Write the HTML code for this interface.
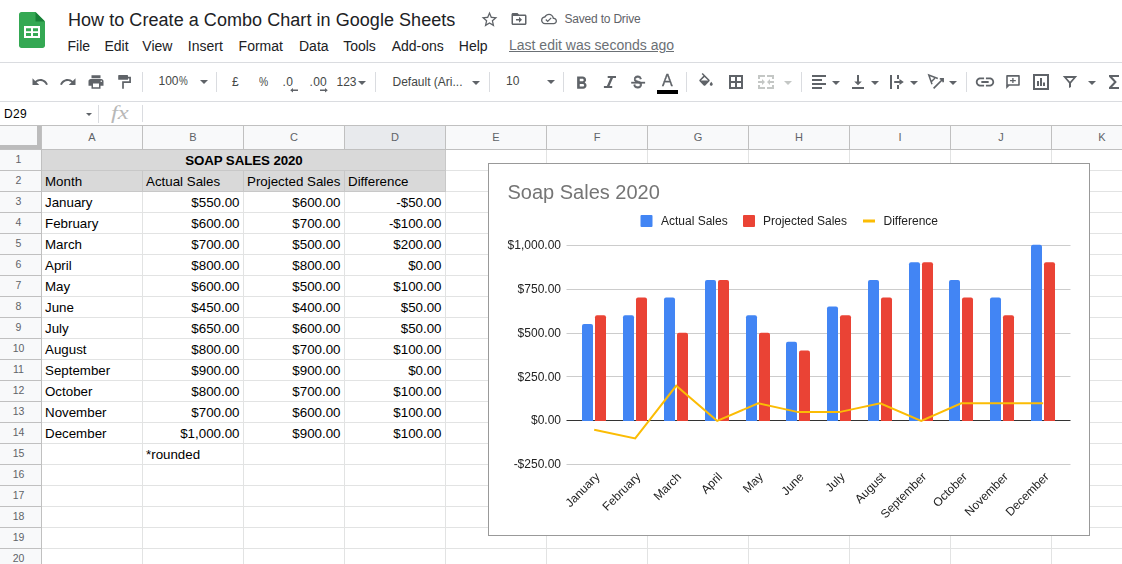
<!DOCTYPE html>
<html lang="en"><head><meta charset="utf-8">
<title>How to Create a Combo Chart in Google Sheets</title>
<style>
*{box-sizing:border-box;margin:0;padding:0}
html,body{width:1122px;height:564px;overflow:hidden;background:#fff}
body{position:relative;font-family:"Liberation Sans",sans-serif;color:#202124}
.t{position:absolute;white-space:nowrap;line-height:1}
.ic{position:absolute;display:block;overflow:visible}
.sep{position:absolute;width:1px;background:#dadce0}
.hl{position:absolute;height:1px}
.vl{position:absolute;width:1px}
.box{position:absolute}
.title{font-size:18px;color:#202124}
.menu{font-size:14px;color:#202124}
.tb{font-size:12px;color:#444746}
.cell{position:absolute;font-size:13.333px;color:#000;height:20px;line-height:22px;white-space:nowrap}
.rn{position:absolute;left:0;width:37px;text-align:center;font-size:10.500px;color:#5f6368;height:20px;line-height:18px}
.ch{position:absolute;text-align:center;font-size:11px;color:#5f6368;height:23px;line-height:23px;top:126px}
</style></head><body>

<!-- title bar -->
<svg class="ic" style="left:19px;top:12px" width="26" height="36" viewBox="0 0 26 36">
<path fill="#34a853" d="M2.500 0H16.500L26 9.500V33.500C26 34.900 24.900 36 23.500 36H2.500C1.100 36 0 34.900 0 33.500V2.500C0 1.100 1.100 0 2.500 0Z"/>
<path fill="#188038" d="M16.500 0L26 9.500H16.500Z"/>
<path fill="#fff" d="M5 14h16v12H5zM7 16.200v3h5v-3zM14 16.200v3h5v-3zM7 21v3h5v-3zM14 21v3h5v-3z" fill-rule="evenodd"/>
</svg>
<div class="t title" style="left:68px;top:11px;letter-spacing:0.050px">How to Create a Combo Chart in Google Sheets</div>
<div class="t menu" style="left:67.5px;top:39px;">File</div>
<div class="t menu" style="left:104.39999999999999px;top:39px;">Edit</div>
<div class="t menu" style="left:142.3px;top:39px;">View</div>
<div class="t menu" style="left:187.8px;top:39px;">Insert</div>
<div class="t menu" style="left:238.60000000000002px;top:39px;">Format</div>
<div class="t menu" style="left:299.0px;top:39px;">Data</div>
<div class="t menu" style="left:343.2px;top:39px;">Tools</div>
<div class="t menu" style="left:391.7px;top:39px;">Add-ons</div>
<div class="t menu" style="left:458.8px;top:39px;">Help</div>
<div class="t menu" style="left:509px;top:38px;color:#6b7075;text-decoration:underline">Last edit was seconds ago</div>
<svg class="ic" style="left:479.5px;top:9.6px" width="19" height="19" viewBox="0 0 24 24"><path fill="#5f6368" d="M22 9.24l-7.19-.62L12 2 9.19 8.63 2 9.24l5.46 4.73L5.82 21 12 17.27 18.18 21l-1.63-7.03L22 9.24zM12 15.4l-3.76 2.27 1-4.28-3.32-2.88 4.38-.38L12 6.1l1.71 4.04 4.38.38-3.32 2.88 1 4.28L12 15.4z"/></svg>
<svg class="ic" style="left:509.5px;top:10px" width="18" height="18" viewBox="0 0 24 24"><path fill="#5f6368" d="M20 6h-8l-2-2H4c-1.100 0-2 .9-2 2v12c0 1.100.9 2 2 2h16c1.100 0 2-.9 2-2V8c0-1.100-.9-2-2-2zm0 12H4V8h16v10zm-8.010-9l4.010 4-4.010 4v-3H8v-2h3.990V9z"/></svg>
<svg class="ic" style="left:541px;top:11px" width="16" height="16" viewBox="0 0 24 24"><path fill="#5f6368" d="M19.35 10.04C18.67 6.59 15.64 4 12 4 9.11 4 6.6 5.64 5.35 8.04 2.34 8.36 0 10.91 0 14c0 3.31 2.69 6 6 6h13c2.76 0 5-2.24 5-5 0-2.64-2.05-4.78-4.65-4.96zM19 18H6c-2.21 0-4-1.79-4-4 0-2.05 1.53-3.76 3.56-3.97l1.07-.11.5-.95C8.08 7.14 9.94 6 12 6c2.62 0 4.88 1.86 5.39 4.43l.3 1.5 1.53.11c1.56.1 2.78 1.41 2.78 2.96 0 1.65-1.35 3-3 3zm-9-3.82l-2.09-2.09L6.5 13.5 10 17l6.01-6.010-1.410-1.410z"/></svg>
<div class="t tb" style="left:564.5px;top:13px;letter-spacing:-0.2px;color:#5f6368">Saved to Drive</div>
<div class="hl" style="left:0;top:62px;width:1122px;background:#dadce0"></div>
<!-- toolbar -->
<svg class="ic" style="left:31px;top:73px" width="18" height="18" viewBox="0 0 24 24"><path fill="#5f6368" d="M12.5 8c-2.65 0-5.05.99-6.9 2.6L2 7v9h9l-3.62-3.62c1.39-1.16 3.16-1.88 5.12-1.88 3.54 0 6.55 2.31 7.6 5.5l2.37-.78C21.08 11.03 17.15 8 12.5 8z"/></svg>
<svg class="ic" style="left:59px;top:73px" width="18" height="18" viewBox="0 0 24 24"><path fill="#5f6368" d="M18.4 10.6C16.55 8.99 14.15 8 11.5 8c-4.65 0-8.58 3.03-9.96 7.22L3.9 16c1.05-3.19 4.05-5.5 7.6-5.5 1.95 0 3.73.72 5.12 1.88L13 16h9V7l-3.6 3.6z"/></svg>
<svg class="ic" style="left:87px;top:73px" width="18" height="18" viewBox="0 0 24 24"><path fill="#5f6368" d="M19 8H5c-1.66 0-3 1.34-3 3v6h4v4h12v-4h4v-6c0-1.66-1.34-3-3-3zm-3 11H8v-5h8v5zm3-7c-.55 0-1-.45-1-1s.45-1 1-1 1 .45 1 1-.45 1-1 1zm-1-9H6v4h12V3z"/></svg>
<div class="sep" style="left:142px;top:72px;height:20px"></div>
<div class="t tb" style="left:158.5px;top:75px;">100</div>
<div class="t tb" style="left:178.7px;top:75px;transform:scaleX(0.82);transform-origin:0 0">%</div>
<svg class="ic" style="left:200px;top:80px" width="8" height="4" viewBox="0 0 8 4"><path fill="#5f6368" d="M0 0h8L4 4z"/></svg>
<div class="sep" style="left:216px;top:72px;height:20px"></div>
<div class="t tb" style="left:232px;top:76px;">£</div>
<div class="t tb" style="left:259px;top:76px;transform:scaleX(0.86);transform-origin:0 0">%</div>
<div class="t tb" style="left:282.5px;top:76px;letter-spacing:0.3px">.0</div>
<div class="t tb" style="left:309.5px;top:76px;letter-spacing:0.3px">.00</div>
<div class="t tb" style="left:336.5px;top:76px;">123</div>
<svg class="ic" style="left:358px;top:81px" width="8" height="4" viewBox="0 0 8 4"><path fill="#5f6368" d="M0 0h8L4 4z"/></svg>
<div class="sep" style="left:375px;top:72px;height:20px"></div>
<div class="t tb" style="left:392.5px;top:76px;">Default (Ari...</div>
<svg class="ic" style="left:472px;top:81px" width="8" height="4" viewBox="0 0 8 4"><path fill="#5f6368" d="M0 0h8L4 4z"/></svg>
<div class="sep" style="left:489px;top:72px;height:20px"></div>
<div class="t tb" style="left:506px;top:75px;">10</div>
<svg class="ic" style="left:547px;top:80px" width="8" height="4" viewBox="0 0 8 4"><path fill="#5f6368" d="M0 0h8L4 4z"/></svg>
<div class="sep" style="left:563px;top:72px;height:20px"></div>
<svg class="ic" style="left:570.7px;top:72.5px" width="21" height="21" viewBox="0 0 24 24"><path fill="#5f6368" d="M15.6 10.79c.97-.67 1.65-1.77 1.65-2.79 0-2.26-1.75-4-4-4H7v14h7.04c2.09 0 3.71-1.7 3.71-3.79 0-1.52-.86-2.82-2.15-3.42zM10 6.5h3c.83 0 1.5.67 1.5 1.5s-.67 1.5-1.5 1.5h-3v-3zm3.500 9H10v-3h3.500c.83 0 1.500.67 1.500 1.500s-.67 1.500-1.500 1.500z"/></svg>
<div class="t tb" style="left:632.4px;top:73.5px;font-size:17px;color:#5f6368;-webkit-text-stroke:0.8px #5f6368;transform:scaleX(0.78);will-change:transform">S</div>
<div class="t tb" style="left:661.5px;top:73px;font-size:16px;color:#5f6368;-webkit-text-stroke:0.3px #5f6368;will-change:transform">A</div>
<div class="box" style="left:657px;top:90px;width:21px;height:4px;background:#000"></div>
<div class="sep" style="left:686px;top:72px;height:20px"></div>
<svg class="ic" style="left:697px;top:73px" width="18" height="18" viewBox="0 0 24 24"><path fill="#5f6368" d="M16.56 8.94L7.62 0 6.21 1.41l2.38 2.38-5.15 5.15c-.59.59-.59 1.54 0 2.12l5.5 5.5c.29.29.68.44 1.06.44s.77-.15 1.06-.44l5.5-5.500c.59-.58.59-1.53 0-2.12zM5.21 10L10 5.21 14.79 10H5.21zM19 11.500s-2 2.170-2 3.500c0 1.100.9 2 2 2s2-.9 2-2c0-1.330-2-3.500-2-3.500z"/></svg>
<svg class="ic" style="left:784px;top:81px" width="8" height="4" viewBox="0 0 8 4"><path fill="#c4c7c5" d="M0 0h8L4 4z"/></svg>
<div class="sep" style="left:801px;top:72px;height:20px"></div>
<svg class="ic" style="left:832px;top:81px" width="8" height="4" viewBox="0 0 8 4"><path fill="#5f6368" d="M0 0h8L4 4z"/></svg>
<svg class="ic" style="left:871px;top:81px" width="8" height="4" viewBox="0 0 8 4"><path fill="#5f6368" d="M0 0h8L4 4z"/></svg>
<svg class="ic" style="left:910px;top:81px" width="8" height="4" viewBox="0 0 8 4"><path fill="#5f6368" d="M0 0h8L4 4z"/></svg>
<svg class="ic" style="left:949px;top:81px" width="8" height="4" viewBox="0 0 8 4"><path fill="#5f6368" d="M0 0h8L4 4z"/></svg>
<div class="sep" style="left:966px;top:72px;height:20px"></div>
<svg class="ic" style="left:974px;top:71px" width="22" height="22" viewBox="0 0 24 24"><path fill="#5f6368" d="M3.9 12c0-1.71 1.39-3.1 3.1-3.1h4V7H7c-2.76 0-5 2.24-5 5s2.24 5 5 5h4v-1.9H7c-1.71 0-3.1-1.39-3.1-3.1zM8 13h8v-2H8v2zm9-6h-4v1.9h4c1.71 0 3.1 1.39 3.1 3.1s-1.39 3.1-3.1 3.1h-4V17h4c2.76 0 5-2.24 5-5s-2.240-5-5-5z"/></svg>
<svg class="ic" style="left:1088px;top:81px" width="8" height="4" viewBox="0 0 8 4"><path fill="#5f6368" d="M0 0h8L4 4z"/></svg>
<svg class="ic" style="left:0;top:62px" width="1122" height="40" viewBox="0 62 1122 40">
<path fill="#5f6368" d="M293 88L290.200 90.300 293 92.600V91H298V89.600H293Z"/>
<path fill="#5f6368" d="M325 88L327.800 90.300 325 92.600V91H320V89.600H325Z"/>
<rect x="118.200" y="75.100" width="9.800" height="4.700" rx="0.600" fill="#5f6368"/>
<path d="M128 77.700H130.100V82.100H123V88.800" fill="none" stroke="#5f6368" stroke-width="1.700" stroke-linejoin="miter"/>
<path d="M607.700 76H616V77.900H613L609.500 86.100H612.200V88H603.900V86.100H606.900L610.400 77.900H607.700Z" fill="#5f6368"/>
<rect x="631.200" y="81.800" width="13.900" height="1.800" fill="#5f6368"/>
<path fill-rule="evenodd" fill="#5f6368" d="M729 75H743V89H729ZM731 77V81H735V77ZM737 77V81H741V77ZM731 83V87H735V83ZM737 83V87H741V83Z"/>
<path fill="#c4c7c5" d="M758 75H765V77H760V79H758ZM767 75H774V79H772V77H767ZM758 85H760V87H765V89H758ZM772 85H774V89H767V87H772ZM758 81.100H762V79L765 82 762 85V82.900H758ZM774 81.100H770V79L767 82 770 85V82.900H774Z"/>
<path fill="#5f6368" d="M812 75H826V77H812ZM812 79H822V81H812ZM812 83H826V85H812ZM812 87H822V89H812Z"/>
<path fill="#5f6368" d="M857 75H859V81.500H861.800L858 85.300 854.200 81.500H857ZM852 87H864V89H852Z"/>
<path fill="#5f6368" d="M890 75H892V89H890ZM897 75H899V79H897ZM897 85H899V89H897ZM894.200 81.100H899.500V79L903.800 82 899.500 85V82.900H894.200Z"/>
<path fill="none" stroke="#5f6368" stroke-width="1.500" stroke-linecap="butt" d="M937.800 78.500L928.800 75.100 932 84.300M931.300 81.700L934.800 78.300"/>
<path fill="none" stroke="#5f6368" stroke-width="1.700" d="M933.600 88.300L943 79M939.800 78.900H943.100V82.300"/>
<path fill="none" stroke="#5f6368" stroke-width="1.600" stroke-linejoin="round" d="M1007 75.900H1019V85H1007Z"/>
<path fill="#5f6368" d="M1006.200 85V88.900L1009.800 85.300Z"/>
<path fill="#5f6368" d="M1012.250 78H1013.550V79.900H1015.800V81.200H1013.550V83.100H1012.250V81.200H1010V79.900H1012.250Z"/>
<path fill-rule="evenodd" fill="#5f6368" d="M1033 74H1049V90H1033ZM1035 76V88H1047V76Z"/>
<path fill="#5f6368" d="M1037 81H1039V86H1037ZM1040 78H1042V86H1040ZM1043 82.500H1045V86H1043Z"/>
<path fill-rule="evenodd" fill="#5f6368" d="M1062.800 76H1077.200L1071 83.300V87L1069 88V83.300ZM1066.700 77.900L1070 81.700 1073.300 77.900Z"/>
<path fill="#5f6368" d="M1109 75H1119V77H1112.200L1116.800 82 1112.200 87H1119V89H1109V87.200L1114 82 1109 76.800Z"/>
</svg>
<div class="hl" style="left:0;top:101px;width:1122px;background:#dadce0"></div>
<!-- formula bar -->
<div class="t " style="left:4px;top:108px;font-size:12px;color:#000;letter-spacing:0.3px">D29</div>
<svg class="ic" style="left:85.500px;top:113px" width="6" height="3" viewBox="0 0 6 3"><path fill="#5f6368" d="M0 0h6L3 3z"/></svg>
<div class="sep" style="left:98px;top:105px;height:18px"></div>
<div class="t " style="left:111px;top:103px;font-family:'Liberation Serif',serif;font-size:19px;color:#b8b8b8;transform:scaleX(1.3);transform-origin:0 0"><i>fx</i></div>
<div class="sep" style="left:142px;top:105px;height:17px"></div>
<!-- grid -->
<div class="box" style="left:0;top:125px;width:1122px;height:24px;background:#f8f9fa"></div>
<div class="box" style="left:0;top:149px;width:41px;height:415px;background:#f8f9fa"></div>
<div class="box" style="left:345px;top:126px;width:100px;height:23px;background:#e8eaed"></div>
<div class="box" style="left:42px;top:150px;width:403px;height:41px;background:#d9d9d9"></div>
<div class="hl" style="left:41px;top:170px;width:1081px;background:#e2e3e3"></div>
<div class="hl" style="left:0;top:170px;width:41px;background:#c0c0c0"></div>
<div class="hl" style="left:41px;top:191px;width:1081px;background:#e2e3e3"></div>
<div class="hl" style="left:0;top:191px;width:41px;background:#c0c0c0"></div>
<div class="hl" style="left:41px;top:212px;width:1081px;background:#e2e3e3"></div>
<div class="hl" style="left:0;top:212px;width:41px;background:#c0c0c0"></div>
<div class="hl" style="left:41px;top:233px;width:1081px;background:#e2e3e3"></div>
<div class="hl" style="left:0;top:233px;width:41px;background:#c0c0c0"></div>
<div class="hl" style="left:41px;top:254px;width:1081px;background:#e2e3e3"></div>
<div class="hl" style="left:0;top:254px;width:41px;background:#c0c0c0"></div>
<div class="hl" style="left:41px;top:275px;width:1081px;background:#e2e3e3"></div>
<div class="hl" style="left:0;top:275px;width:41px;background:#c0c0c0"></div>
<div class="hl" style="left:41px;top:296px;width:1081px;background:#e2e3e3"></div>
<div class="hl" style="left:0;top:296px;width:41px;background:#c0c0c0"></div>
<div class="hl" style="left:41px;top:317px;width:1081px;background:#e2e3e3"></div>
<div class="hl" style="left:0;top:317px;width:41px;background:#c0c0c0"></div>
<div class="hl" style="left:41px;top:338px;width:1081px;background:#e2e3e3"></div>
<div class="hl" style="left:0;top:338px;width:41px;background:#c0c0c0"></div>
<div class="hl" style="left:41px;top:359px;width:1081px;background:#e2e3e3"></div>
<div class="hl" style="left:0;top:359px;width:41px;background:#c0c0c0"></div>
<div class="hl" style="left:41px;top:380px;width:1081px;background:#e2e3e3"></div>
<div class="hl" style="left:0;top:380px;width:41px;background:#c0c0c0"></div>
<div class="hl" style="left:41px;top:401px;width:1081px;background:#e2e3e3"></div>
<div class="hl" style="left:0;top:401px;width:41px;background:#c0c0c0"></div>
<div class="hl" style="left:41px;top:422px;width:1081px;background:#e2e3e3"></div>
<div class="hl" style="left:0;top:422px;width:41px;background:#c0c0c0"></div>
<div class="hl" style="left:41px;top:443px;width:1081px;background:#e2e3e3"></div>
<div class="hl" style="left:0;top:443px;width:41px;background:#c0c0c0"></div>
<div class="hl" style="left:41px;top:464px;width:1081px;background:#e2e3e3"></div>
<div class="hl" style="left:0;top:464px;width:41px;background:#c0c0c0"></div>
<div class="hl" style="left:41px;top:485px;width:1081px;background:#e2e3e3"></div>
<div class="hl" style="left:0;top:485px;width:41px;background:#c0c0c0"></div>
<div class="hl" style="left:41px;top:506px;width:1081px;background:#e2e3e3"></div>
<div class="hl" style="left:0;top:506px;width:41px;background:#c0c0c0"></div>
<div class="hl" style="left:41px;top:527px;width:1081px;background:#e2e3e3"></div>
<div class="hl" style="left:0;top:527px;width:41px;background:#c0c0c0"></div>
<div class="hl" style="left:41px;top:548px;width:1081px;background:#e2e3e3"></div>
<div class="hl" style="left:0;top:548px;width:41px;background:#c0c0c0"></div>
<div class="vl" style="left:142px;top:149px;height:415px;background:#e2e3e3"></div>
<div class="vl" style="left:142px;top:126px;height:23px;background:#c0c0c0"></div>
<div class="vl" style="left:243px;top:149px;height:415px;background:#e2e3e3"></div>
<div class="vl" style="left:243px;top:126px;height:23px;background:#c0c0c0"></div>
<div class="vl" style="left:344px;top:149px;height:415px;background:#e2e3e3"></div>
<div class="vl" style="left:344px;top:126px;height:23px;background:#c0c0c0"></div>
<div class="vl" style="left:445px;top:149px;height:415px;background:#e2e3e3"></div>
<div class="vl" style="left:445px;top:126px;height:23px;background:#c0c0c0"></div>
<div class="vl" style="left:546px;top:149px;height:415px;background:#e2e3e3"></div>
<div class="vl" style="left:546px;top:126px;height:23px;background:#c0c0c0"></div>
<div class="vl" style="left:647px;top:149px;height:415px;background:#e2e3e3"></div>
<div class="vl" style="left:647px;top:126px;height:23px;background:#c0c0c0"></div>
<div class="vl" style="left:748px;top:149px;height:415px;background:#e2e3e3"></div>
<div class="vl" style="left:748px;top:126px;height:23px;background:#c0c0c0"></div>
<div class="vl" style="left:849px;top:149px;height:415px;background:#e2e3e3"></div>
<div class="vl" style="left:849px;top:126px;height:23px;background:#c0c0c0"></div>
<div class="vl" style="left:950px;top:149px;height:415px;background:#e2e3e3"></div>
<div class="vl" style="left:950px;top:126px;height:23px;background:#c0c0c0"></div>
<div class="vl" style="left:1051px;top:149px;height:415px;background:#e2e3e3"></div>
<div class="vl" style="left:1051px;top:126px;height:23px;background:#c0c0c0"></div>
<div class="hl" style="left:41px;top:170px;width:405px;background:#c8c8c8"></div>
<div class="hl" style="left:41px;top:191px;width:405px;background:#c8c8c8"></div>
<div class="vl" style="left:142px;top:171px;height:20px;background:#c8c8c8"></div>
<div class="vl" style="left:243px;top:171px;height:20px;background:#c8c8c8"></div>
<div class="vl" style="left:344px;top:171px;height:20px;background:#c8c8c8"></div>
<div class="vl" style="left:445px;top:149px;height:42px;background:#c8c8c8"></div>
<div class="box" style="left:42px;top:150px;width:403px;height:20px;background:#d9d9d9"></div>
<div class="hl" style="left:0;top:125px;width:1122px;background:#c0c0c0"></div>
<div class="hl" style="left:0;top:149px;width:1122px;background:#c0c0c0"></div>
<div class="vl" style="left:41px;top:126px;height:438px;background:#c0c0c0"></div>
<div class="box" style="left:37px;top:126px;width:4px;height:23px;background:#bcbcbc"></div>
<div class="box" style="left:0;top:145px;width:41px;height:4px;background:#bcbcbc"></div>
<div class="ch" style="left:42px;width:100px">A</div>
<div class="ch" style="left:143px;width:100px">B</div>
<div class="ch" style="left:244px;width:100px">C</div>
<div class="ch" style="left:345px;width:100px">D</div>
<div class="ch" style="left:446px;width:100px">E</div>
<div class="ch" style="left:547px;width:100px">F</div>
<div class="ch" style="left:648px;width:100px">G</div>
<div class="ch" style="left:749px;width:100px">H</div>
<div class="ch" style="left:850px;width:100px">I</div>
<div class="ch" style="left:951px;width:100px">J</div>
<div class="ch" style="left:1052px;width:100px">K</div>
<div class="rn" style="top:150px">1</div>
<div class="rn" style="top:171px">2</div>
<div class="rn" style="top:192px">3</div>
<div class="rn" style="top:213px">4</div>
<div class="rn" style="top:234px">5</div>
<div class="rn" style="top:255px">6</div>
<div class="rn" style="top:276px">7</div>
<div class="rn" style="top:297px">8</div>
<div class="rn" style="top:318px">9</div>
<div class="rn" style="top:339px">10</div>
<div class="rn" style="top:360px">11</div>
<div class="rn" style="top:381px">12</div>
<div class="rn" style="top:402px">13</div>
<div class="rn" style="top:423px">14</div>
<div class="rn" style="top:444px">15</div>
<div class="rn" style="top:465px">16</div>
<div class="rn" style="top:486px">17</div>
<div class="rn" style="top:507px">18</div>
<div class="rn" style="top:528px">19</div>
<div class="rn" style="top:549px">20</div>
<div class="cell" style="left:42.400px;top:150px;width:403px;text-align:center;font-weight:bold;letter-spacing:-0.100px">SOAP SALES 2020</div>
<div class="cell" style="left:45px;top:171px">Month</div>
<div class="cell" style="left:146px;top:171px">Actual Sales</div>
<div class="cell" style="left:247px;top:171px">Projected Sales</div>
<div class="cell" style="left:348px;top:171px">Difference</div>
<div class="cell" style="left:45px;top:192px">January</div>
<div class="cell" style="left:143px;top:192px;width:96.500px;text-align:right">$550.00</div>
<div class="cell" style="left:244px;top:192px;width:96.500px;text-align:right">$600.00</div>
<div class="cell" style="left:345px;top:192px;width:96.500px;text-align:right">-$50.00</div>
<div class="cell" style="left:45px;top:213px">February</div>
<div class="cell" style="left:143px;top:213px;width:96.500px;text-align:right">$600.00</div>
<div class="cell" style="left:244px;top:213px;width:96.500px;text-align:right">$700.00</div>
<div class="cell" style="left:345px;top:213px;width:96.500px;text-align:right">-$100.00</div>
<div class="cell" style="left:45px;top:234px">March</div>
<div class="cell" style="left:143px;top:234px;width:96.500px;text-align:right">$700.00</div>
<div class="cell" style="left:244px;top:234px;width:96.500px;text-align:right">$500.00</div>
<div class="cell" style="left:345px;top:234px;width:96.500px;text-align:right">$200.00</div>
<div class="cell" style="left:45px;top:255px">April</div>
<div class="cell" style="left:143px;top:255px;width:96.500px;text-align:right">$800.00</div>
<div class="cell" style="left:244px;top:255px;width:96.500px;text-align:right">$800.00</div>
<div class="cell" style="left:345px;top:255px;width:96.500px;text-align:right">$0.00</div>
<div class="cell" style="left:45px;top:276px">May</div>
<div class="cell" style="left:143px;top:276px;width:96.500px;text-align:right">$600.00</div>
<div class="cell" style="left:244px;top:276px;width:96.500px;text-align:right">$500.00</div>
<div class="cell" style="left:345px;top:276px;width:96.500px;text-align:right">$100.00</div>
<div class="cell" style="left:45px;top:297px">June</div>
<div class="cell" style="left:143px;top:297px;width:96.500px;text-align:right">$450.00</div>
<div class="cell" style="left:244px;top:297px;width:96.500px;text-align:right">$400.00</div>
<div class="cell" style="left:345px;top:297px;width:96.500px;text-align:right">$50.00</div>
<div class="cell" style="left:45px;top:318px">July</div>
<div class="cell" style="left:143px;top:318px;width:96.500px;text-align:right">$650.00</div>
<div class="cell" style="left:244px;top:318px;width:96.500px;text-align:right">$600.00</div>
<div class="cell" style="left:345px;top:318px;width:96.500px;text-align:right">$50.00</div>
<div class="cell" style="left:45px;top:339px">August</div>
<div class="cell" style="left:143px;top:339px;width:96.500px;text-align:right">$800.00</div>
<div class="cell" style="left:244px;top:339px;width:96.500px;text-align:right">$700.00</div>
<div class="cell" style="left:345px;top:339px;width:96.500px;text-align:right">$100.00</div>
<div class="cell" style="left:45px;top:360px">September</div>
<div class="cell" style="left:143px;top:360px;width:96.500px;text-align:right">$900.00</div>
<div class="cell" style="left:244px;top:360px;width:96.500px;text-align:right">$900.00</div>
<div class="cell" style="left:345px;top:360px;width:96.500px;text-align:right">$0.00</div>
<div class="cell" style="left:45px;top:381px">October</div>
<div class="cell" style="left:143px;top:381px;width:96.500px;text-align:right">$800.00</div>
<div class="cell" style="left:244px;top:381px;width:96.500px;text-align:right">$700.00</div>
<div class="cell" style="left:345px;top:381px;width:96.500px;text-align:right">$100.00</div>
<div class="cell" style="left:45px;top:402px">November</div>
<div class="cell" style="left:143px;top:402px;width:96.500px;text-align:right">$700.00</div>
<div class="cell" style="left:244px;top:402px;width:96.500px;text-align:right">$600.00</div>
<div class="cell" style="left:345px;top:402px;width:96.500px;text-align:right">$100.00</div>
<div class="cell" style="left:45px;top:423px">December</div>
<div class="cell" style="left:143px;top:423px;width:96.500px;text-align:right">$1,000.00</div>
<div class="cell" style="left:244px;top:423px;width:96.500px;text-align:right">$900.00</div>
<div class="cell" style="left:345px;top:423px;width:96.500px;text-align:right">$100.00</div>
<div class="cell" style="left:146px;top:444px">*rounded</div>
<!-- chart -->
<svg class="ic" style="left:488px;top:163px;will-change:transform" width="602" height="373" viewBox="488 163 602 373" font-family="'Liberation Sans',sans-serif">
<rect x="488.5" y="163.5" width="601" height="372" fill="#fff" stroke="#999" stroke-width="1"/>
<text x="507.500" y="199" font-size="20" fill="#757575">Soap Sales 2020</text>
<rect x="640.500" y="215" width="12" height="12" rx="1" fill="#4285f4"/>
<text x="661" y="225" font-size="12" fill="#222">Actual Sales</text>
<rect x="743" y="215" width="12" height="12" rx="1" fill="#ea4335"/>
<text x="763" y="225" font-size="12" fill="#222">Projected Sales</text>
<rect x="863" y="219.500" width="12" height="3" fill="#fbbc04"/>
<text x="883.500" y="225" font-size="12" fill="#222">Difference</text>
<line x1="566.500" x2="1070.500" y1="245.5" y2="245.5" stroke="#ccc" stroke-width="1"/>
<line x1="566.500" x2="1070.500" y1="289.5" y2="289.5" stroke="#ccc" stroke-width="1"/>
<line x1="566.500" x2="1070.500" y1="333.5" y2="333.5" stroke="#ccc" stroke-width="1"/>
<line x1="566.500" x2="1070.500" y1="376.5" y2="376.5" stroke="#ccc" stroke-width="1"/>
<line x1="566.500" x2="1070.500" y1="464.5" y2="464.5" stroke="#ccc" stroke-width="1"/>
<text x="561" y="249" font-size="12" fill="#222" text-anchor="end">$1,000.00</text>
<text x="561" y="293" font-size="12" fill="#222" text-anchor="end">$750.00</text>
<text x="561" y="337" font-size="12" fill="#222" text-anchor="end">$500.00</text>
<text x="561" y="381" font-size="12" fill="#222" text-anchor="end">$250.00</text>
<text x="561" y="424" font-size="12" fill="#222" text-anchor="end">$0.00</text>
<text x="561" y="468" font-size="12" fill="#222" text-anchor="end">-$250.00</text>
<line x1="566.500" x2="1070.500" y1="420.500" y2="420.500" stroke="#333" stroke-width="1"/>
<path fill="#4285f4" d="M582 421.0V326.03a2 2 0 0 1 2-2h7a2 2 0 0 1 2 2V421.0z"/>
<path fill="#ea4335" d="M595 421.0V317.22a2 2 0 0 1 2-2h7a2 2 0 0 1 2 2V421.0z"/>
<path fill="#4285f4" d="M623 421.0V317.22a2 2 0 0 1 2-2h7a2 2 0 0 1 2 2V421.0z"/>
<path fill="#ea4335" d="M636 421.0V299.59a2 2 0 0 1 2-2h7a2 2 0 0 1 2 2V421.0z"/>
<path fill="#4285f4" d="M664 421.0V299.59a2 2 0 0 1 2-2h7a2 2 0 0 1 2 2V421.0z"/>
<path fill="#ea4335" d="M677 421.0V334.85a2 2 0 0 1 2-2h7a2 2 0 0 1 2 2V421.0z"/>
<path fill="#4285f4" d="M705 421.0V281.96a2 2 0 0 1 2-2h7a2 2 0 0 1 2 2V421.0z"/>
<path fill="#ea4335" d="M718 421.0V281.96a2 2 0 0 1 2-2h7a2 2 0 0 1 2 2V421.0z"/>
<path fill="#4285f4" d="M746 421.0V317.22a2 2 0 0 1 2-2h7a2 2 0 0 1 2 2V421.0z"/>
<path fill="#ea4335" d="M759 421.0V334.85a2 2 0 0 1 2-2h7a2 2 0 0 1 2 2V421.0z"/>
<path fill="#4285f4" d="M786 421.0V343.66a2 2 0 0 1 2-2h7a2 2 0 0 1 2 2V421.0z"/>
<path fill="#ea4335" d="M799 421.0V352.48a2 2 0 0 1 2-2h7a2 2 0 0 1 2 2V421.0z"/>
<path fill="#4285f4" d="M827 421.0V308.40a2 2 0 0 1 2-2h7a2 2 0 0 1 2 2V421.0z"/>
<path fill="#ea4335" d="M840 421.0V317.22a2 2 0 0 1 2-2h7a2 2 0 0 1 2 2V421.0z"/>
<path fill="#4285f4" d="M868 421.0V281.96a2 2 0 0 1 2-2h7a2 2 0 0 1 2 2V421.0z"/>
<path fill="#ea4335" d="M881 421.0V299.59a2 2 0 0 1 2-2h7a2 2 0 0 1 2 2V421.0z"/>
<path fill="#4285f4" d="M909 421.0V264.33a2 2 0 0 1 2-2h7a2 2 0 0 1 2 2V421.0z"/>
<path fill="#ea4335" d="M922 421.0V264.33a2 2 0 0 1 2-2h7a2 2 0 0 1 2 2V421.0z"/>
<path fill="#4285f4" d="M949 421.0V281.96a2 2 0 0 1 2-2h7a2 2 0 0 1 2 2V421.0z"/>
<path fill="#ea4335" d="M962 421.0V299.59a2 2 0 0 1 2-2h7a2 2 0 0 1 2 2V421.0z"/>
<path fill="#4285f4" d="M990 421.0V299.59a2 2 0 0 1 2-2h7a2 2 0 0 1 2 2V421.0z"/>
<path fill="#ea4335" d="M1003 421.0V317.22a2 2 0 0 1 2-2h7a2 2 0 0 1 2 2V421.0z"/>
<path fill="#4285f4" d="M1031 421.0V246.70a2 2 0 0 1 2-2h7a2 2 0 0 1 2 2V421.0z"/>
<path fill="#ea4335" d="M1044 421.0V264.33a2 2 0 0 1 2-2h7a2 2 0 0 1 2 2V421.0z"/>
<polyline points="594.20,429.67 635.20,438.45 676.20,385.80 717.20,420.90 758.20,403.35 798.20,412.12 839.20,412.12 880.20,403.35 921.20,420.90 961.20,403.35 1002.20,403.35 1043.20,403.35" fill="none" stroke="#fbbc04" stroke-width="2"/>
<text x="600.40" y="477.5" font-size="12" fill="#222" text-anchor="end" transform="rotate(-45 600.40 477.5)">January</text>
<text x="641.23" y="477.5" font-size="12" fill="#222" text-anchor="end" transform="rotate(-45 641.23 477.5)">February</text>
<text x="682.07" y="477.5" font-size="12" fill="#222" text-anchor="end" transform="rotate(-45 682.07 477.5)">March</text>
<text x="722.90" y="477.5" font-size="12" fill="#222" text-anchor="end" transform="rotate(-45 722.90 477.5)">April</text>
<text x="763.73" y="477.5" font-size="12" fill="#222" text-anchor="end" transform="rotate(-45 763.73 477.5)">May</text>
<text x="804.57" y="477.5" font-size="12" fill="#222" text-anchor="end" transform="rotate(-45 804.57 477.5)">June</text>
<text x="845.40" y="477.5" font-size="12" fill="#222" text-anchor="end" transform="rotate(-45 845.40 477.5)">July</text>
<text x="886.23" y="477.5" font-size="12" fill="#222" text-anchor="end" transform="rotate(-45 886.23 477.5)">August</text>
<text x="927.07" y="477.5" font-size="12" fill="#222" text-anchor="end" transform="rotate(-45 927.07 477.5)">September</text>
<text x="967.90" y="477.5" font-size="12" fill="#222" text-anchor="end" transform="rotate(-45 967.90 477.5)">October</text>
<text x="1008.73" y="477.5" font-size="12" fill="#222" text-anchor="end" transform="rotate(-45 1008.73 477.5)">November</text>
<text x="1049.57" y="477.5" font-size="12" fill="#222" text-anchor="end" transform="rotate(-45 1049.57 477.5)">December</text>
</svg>
</body></html>
